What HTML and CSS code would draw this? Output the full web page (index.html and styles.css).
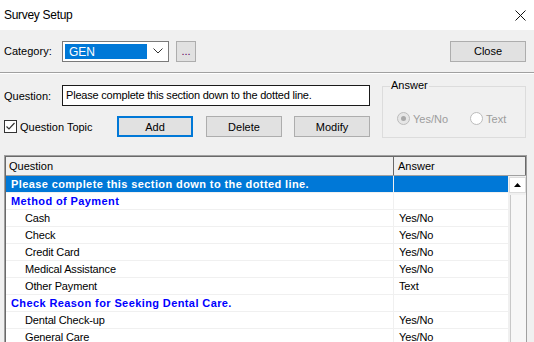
FILE: index.html
```html
<!DOCTYPE html>
<html lang="en">
<head>
  <meta charset="UTF-8" />
  <title>Survey Setup</title>
  <link rel="stylesheet" href="styles.css">
</head>
<body>
  <div class="window">
    <div class="titlebar">
      <span class="title">Survey Setup</span>
      <svg class="close-x" width="11" height="11" viewBox="0 0 11 11">
        <path d="M0.5 0.5 L10.5 10.5 M10.5 0.5 L0.5 10.5" stroke="#111" stroke-width="1" fill="none"/>
      </svg>
    </div>

    <div class="toolbar">
      <span class="lbl lbl-cat">Category:</span>
      <div class="combo">
        <span class="combo-value">GEN</span>
        <svg class="combo-arrow" width="10" height="6" viewBox="0 0 10 6">
          <path d="M0.5 0.5 L5 5 L9.5 0.5" stroke="#333" stroke-width="1" fill="none"/>
        </svg>
      </div>
      <button class="btn btn-more">...</button>
      <button class="btn btn-close">Close</button>
    </div>

    <div class="editor">
      <div class="editor-main">
        <div class="q-row">
          <span class="lbl lbl-q">Question:</span>
          <div class="q-input">Please complete this section down to the dotted line.</div>
        </div>
        <div class="btn-row">
          <label class="check">
            <svg class="check-box" width="13" height="13" viewBox="0 0 13 13">
              <rect x="0.5" y="0.5" width="12" height="12" fill="#fff" stroke="#333"/>
              <path d="M2.5 6.5 L5 9 L10.5 3" stroke="#333" stroke-width="1.2" fill="none"/>
            </svg>
            Question Topic
          </label>
          <button class="btn btn-add">Add</button>
          <button class="btn btn-delete">Delete</button>
          <button class="btn btn-modify">Modify</button>
        </div>
      </div>
      <div class="answer-box">
        <span class="answer-legend">Answer</span>
        <div class="radios">
          <span class="radio"><span class="dot checked"></span>Yes/No</span>
          <span class="radio"><span class="dot"></span>Text</span>
        </div>
      </div>
    </div>

    <div class="grid">
      <div class="grid-head">
        <div class="hc hc-q">Question</div>
        <div class="hc hc-a">Answer</div>
      </div>
      <div class="grid-body">
        <div class="rows">
          <div class="row selected"><div class="c-q">Please complete this section down to the dotted line.</div><div class="c-a"></div></div>
          <div class="row topic"><div class="c-q">Method of Payment</div><div class="c-a"></div></div>
          <div class="row"><div class="c-q sub">Cash</div><div class="c-a">Yes/No</div></div>
          <div class="row"><div class="c-q sub">Check</div><div class="c-a">Yes/No</div></div>
          <div class="row"><div class="c-q sub">Credit Card</div><div class="c-a">Yes/No</div></div>
          <div class="row"><div class="c-q sub">Medical Assistance</div><div class="c-a">Yes/No</div></div>
          <div class="row"><div class="c-q sub">Other Payment</div><div class="c-a">Text</div></div>
          <div class="row topic"><div class="c-q">Check Reason for Seeking Dental Care.</div><div class="c-a"></div></div>
          <div class="row"><div class="c-q sub">Dental Check-up</div><div class="c-a">Yes/No</div></div>
          <div class="row"><div class="c-q sub">General Care</div><div class="c-a">Yes/No</div></div>
        </div>
        <div class="scrollbar">
          <div class="sb-up">
            <svg width="7" height="4" viewBox="0 0 7 4"><path d="M0 4 L3.5 0 L7 4 Z" fill="#000"/></svg>
          </div>
          <div class="sb-thumb"></div>
        </div>
      </div>
    </div>
  </div>
</body>
</html>
```

FILE: styles.css
```css
body {
  margin: 0;
  padding: 0;
  font-family: "Liberation Sans", Arial, sans-serif;
  font-size: 11px;
  color: #000;
}

.window {
  width: 534px;
  height: 342px;
  overflow: hidden;
  background: #f0f0f0;
}

.titlebar {
  height: 30px;
  background: #fff;
  display: flex;
  align-items: center;
  justify-content: space-between;
  padding: 0 8px 0 4px;
}

.title {
  font-size: 12px;
  letter-spacing: -0.3px;
  color: #000;
}

.toolbar {
  height: 42px;
  display: flex;
  align-items: center;
  padding: 0 8px 0 4px;
  border-bottom: 1px solid #a0a0a0;
  box-shadow: 0 1px 0 #fff;
}

.lbl-cat {
  width: 58px;
}

.combo {
  width: 103px;
  height: 19px;
  border: 1px solid #7a7a7a;
  background: #fff;
  display: flex;
  align-items: center;
  padding-left: 2px;
  box-sizing: content-box;
}

.combo-value {
  width: 78px;
  height: 15px;
  line-height: 16px;
  background: #0078d7;
  color: #fff;
  padding-left: 4px;
  font-size: 12px;
}

.combo-arrow {
  margin-left: 6px;
}

.btn {
  font-family: "Liberation Sans", Arial, sans-serif;
  font-size: 11px;
  color: #000;
  background: #e1e1e1;
  border: 1px solid #adadad;
  height: 21px;
  width: 76px;
  padding: 0;
  box-sizing: border-box;
}

.btn-more {
  width: 20px;
  margin-left: 7px;
  color: #5a005a;
  line-height: 14px;
}

.btn-close {
  margin-left: auto;
}

.editor {
  display: flex;
  padding: 12px 8px 0 4px;
}

.editor-main {
  width: 366px;
}

.q-row {
  display: flex;
  align-items: center;
  height: 21px;
}

.lbl-q {
  width: 58px;
}

.q-input {
  width: 308px;
  height: 21px;
  box-sizing: border-box;
  border: 1px solid #1a1a1a;
  background: #fff;
  padding: 3px 3px 0;
  font-size: 11px;
  letter-spacing: -0.2px;
  white-space: nowrap;
}

.btn-row {
  display: flex;
  align-items: center;
  margin-top: 10px;
  height: 21px;
}

.check {
  display: flex;
  align-items: center;
  gap: 3px;
  width: 113px;
  font-size: 11px;
}

.btn-delete {
  margin-left: 13px;
}

.btn-modify {
  margin-left: 12px;
}

.btn-add {
  border: 2px solid #0078d7;
}

.answer-box {
  position: relative;
  margin: 1px 0 0 12px;
  width: 142px;
  height: 50px;
  border: 1px solid #dcdcdc;
}

.answer-legend {
  position: absolute;
  left: 7px;
  top: -8px;
  padding: 0 1px;
  background: #f0f0f0;
  font-size: 11px;
  color: #000;
}

.radios {
  display: flex;
  align-items: center;
  padding: 25px 0 0 14px;
}

.radio {
  display: flex;
  align-items: center;
  gap: 3px;
  color: #9d9d9d;
  font-size: 11px;
  margin-right: 22px;
}

.dot {
  width: 11px;
  height: 11px;
  border: 1px solid #bcbcbc;
  border-radius: 50%;
  background: #fff;
  position: relative;
}

.dot.checked {
  background: #e6e6e6;
}

.dot.checked::after {
  content: "";
  position: absolute;
  left: 3px;
  top: 3px;
  width: 5px;
  height: 5px;
  border-radius: 50%;
  background: #a9a9a9;
}

.grid {
  margin: 17px 7px 0 4px;
  border: 1px solid #a0a0a0;
  box-shadow: inset 1px 1px 0 #696969;
  background: #fff;
  height: 200px;
}

.grid-head {
  display: flex;
  height: 18px;
  background: #f0f0f0;
  border-bottom: 1px solid #a0a0a0;
  margin: 1px 0 0 1px;
}

.hc {
  line-height: 18px;
  padding-left: 3px;
  box-sizing: border-box;
}

.hc-q {
  width: 388px;
  border-right: 1px solid #696969;
}

.hc-a {
  flex: 1;
  border-right: 1px solid #696969;
  padding-left: 4px;
}

.grid-body {
  display: flex;
  margin-left: 1px;
}

.rows {
  width: 503px;
}

.row {
  display: flex;
  height: 17px;
  box-sizing: border-box;
  border-bottom: 1px solid #f0f0f0;
  line-height: 16px;
  letter-spacing: -0.15px;
}

.c-q {
  width: 388px;
  border-right: 1px solid #f0f0f0;
  padding-left: 5px;
  box-sizing: border-box;
  white-space: nowrap;
}

.c-q.sub {
  padding-left: 19px;
}

.c-a {
  flex: 1;
  padding-left: 5px;
}

.row.selected {
  background: #0078d7;
  color: #fff;
  font-weight: bold;
  letter-spacing: 0.4px;
}

.row.topic {
  color: #0000ff;
  font-weight: bold;
  letter-spacing: 0.4px;
}

.scrollbar {
  width: 18px;
  background: #f0f0f0;
  display: flex;
  flex-direction: column;
  align-items: flex-end;
}

.sb-up {
  width: 17px;
  height: 16px;
  background: #fff;
  border: 1px solid #dcdcdc;
  box-sizing: border-box;
  display: flex;
  align-items: center;
  justify-content: center;
  margin-top: 1px;
}

.sb-thumb {
  width: 15px;
  flex: 1;
  margin-top: 2px;
  height: 160px;
  background: #f7f7f7;
  border-left: 1px solid #c8c8c8;
}
```
